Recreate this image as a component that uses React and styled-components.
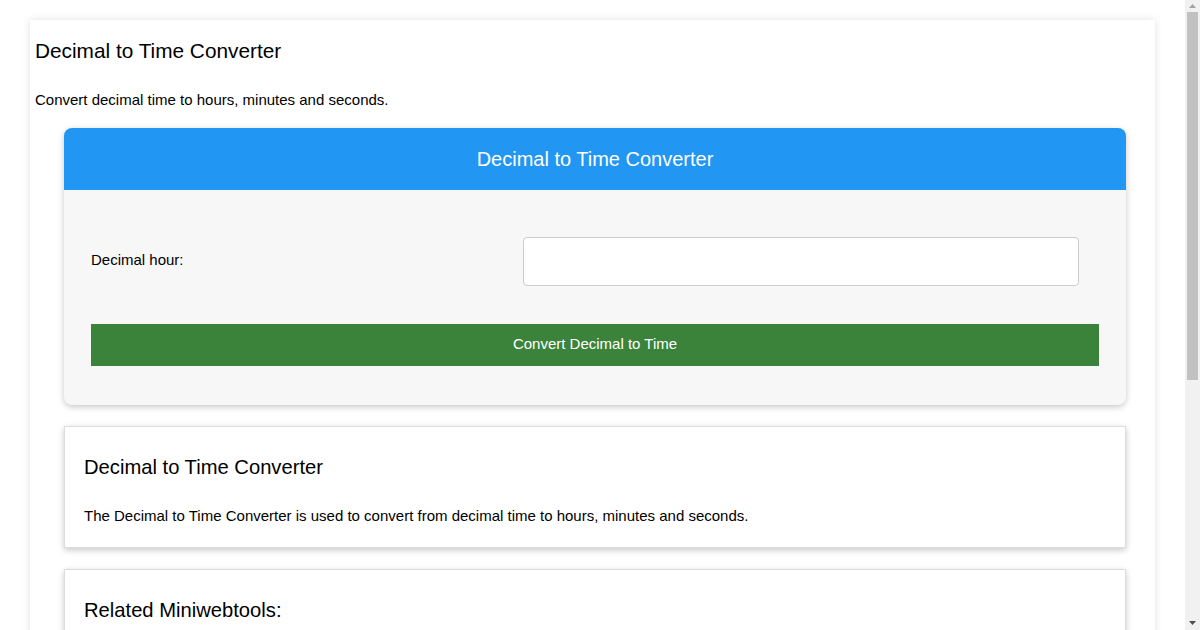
import styled, { createGlobalStyle } from "styled-components"

const GlobalStyle = createGlobalStyle`
    html, body {
        margin: 0;
        padding: 0;
        background: #fff;
        font-family: "Liberation Sans", Arial, sans-serif;
        color: #000;
        overflow: hidden;
    }
`

const Window = styled.div`
    display: flex;
    height: 100vh;
    background: #fff;
`

const Content = styled.div`
    flex: 1;
    min-width: 0;
    overflow: hidden;
`

// browser scrollbar as drawn in the screenshot
const ScrollBar = styled.div`
    width: 15px;
    flex-shrink: 0;
    background: #f1f1f1;
    display: flex;
    flex-direction: column;
`

const ScrollButton = styled.div`
    height: ${props => props.h}px;
    display: flex;
    align-items: center;
    justify-content: center;
    flex-shrink: 0;
`

const Thumb = styled.div`
    height: 368px;
    margin: 0 2px;
    background: #c1c1c1;
`

const Spacer = styled.div`
    flex: 1;
`

const Page = styled.div`
    margin: 20px 30px 0;
    padding: 1px 0 40px 5px;
    background: #fff;
    box-shadow: 0 0 8px rgba(0, 0, 0, 0.12);
    min-height: 900px;
`

const PageTitle = styled.h1`
    font-size: 20.8px;
    font-weight: 400;
    margin: 18px 0 0;
    line-height: 24px;
`

const Intro = styled.p`
    font-size: 15px;
    margin: 27px 0 18px;
    line-height: 20px;
`

const Card = styled.div`
    margin: 0 29px 21px 29px;
    border-radius: ${props => props.rounded ? "8px" : "0"};
    background: ${props => props.bg || "#fff"};
    border: ${props => props.rounded ? "none" : "1px solid #ddd"};
    box-shadow: 0 2px 6px rgba(0, 0, 0, 0.22);
    overflow: hidden;
`

const CardHeader = styled.div`
    height: 62px;
    background: #2196f3;
    color: #fff;
    font-size: 20px;
    display: flex;
    align-items: center;
    justify-content: center;
`

const CardBody = styled.div`
    padding: 47px 27px 39px;
`

const Row = styled.div`
    display: grid;
    grid-template-columns: 432px 556px;
    align-items: center;
`

const Label = styled.label`
    font-size: 15px;
    padding-bottom: 4px;
`

const Input = styled.input`
    box-sizing: border-box;
    height: 49px;
    width: 100%;
    border: 1px solid #ccc;
    border-radius: 4px;
    background: #fff;
    font-size: 15px;
    padding: 0 10px;
    &:focus {
        outline: none;
    }
`

const Button = styled.button`
    display: block;
    width: 100%;
    height: 42px;
    margin-top: 38px;
    padding: 0 0 4px;
    border: none;
    background: #3b833a;
    color: #fff;
    font-family: "Liberation Sans", Arial, sans-serif;
    font-size: 15px;
    cursor: pointer;
`

const InfoBody = styled.div`
    padding: 28px 19px 21px;
`

const InfoTitle = styled.h2`
    font-size: 20.2px;
    font-weight: 400;
    margin: 0;
    line-height: 24px;
`

const InfoText = styled.p`
    font-size: 15px;
    margin: 27px 0 0;
    line-height: 20px;
`

const Arrow = ({ up, color }) => (
    <svg width="7" height="4" viewBox="0 0 7 4">
        <polygon points={up ? "0,4 7,4 3.5,0" : "0,0 7,0 3.5,4"} fill={color} />
    </svg>
)

const App = () => {
    return (
        <>
            <GlobalStyle />
            <Window>
                <Content>
                    <Page>
                        <PageTitle>Decimal to Time Converter</PageTitle>
                        <Intro>Convert decimal time to hours, minutes and seconds.</Intro>

                        <Card rounded bg="#f7f7f7">
                            <CardHeader>Decimal to Time Converter</CardHeader>
                            <CardBody>
                                <Row>
                                    <Label htmlFor="hour">Decimal hour:</Label>
                                    <Input id="hour" type="text" />
                                </Row>
                                <Button>Convert Decimal to Time</Button>
                            </CardBody>
                        </Card>

                        <Card>
                            <InfoBody>
                                <InfoTitle>Decimal to Time Converter</InfoTitle>
                                <InfoText>The Decimal to Time Converter is used to convert from decimal time to hours, minutes and seconds.</InfoText>
                            </InfoBody>
                        </Card>

                        <Card>
                            <InfoBody>
                                <InfoTitle>Related Miniwebtools:</InfoTitle>
                            </InfoBody>
                        </Card>
                    </Page>
                </Content>
                <ScrollBar>
                    <ScrollButton h={12}><Arrow up color="#a3a3a3" /></ScrollButton>
                    <Thumb />
                    <Spacer />
                    <ScrollButton h={14}><Arrow color="#505050" /></ScrollButton>
                </ScrollBar>
            </Window>
        </>
    )
}

export default App
